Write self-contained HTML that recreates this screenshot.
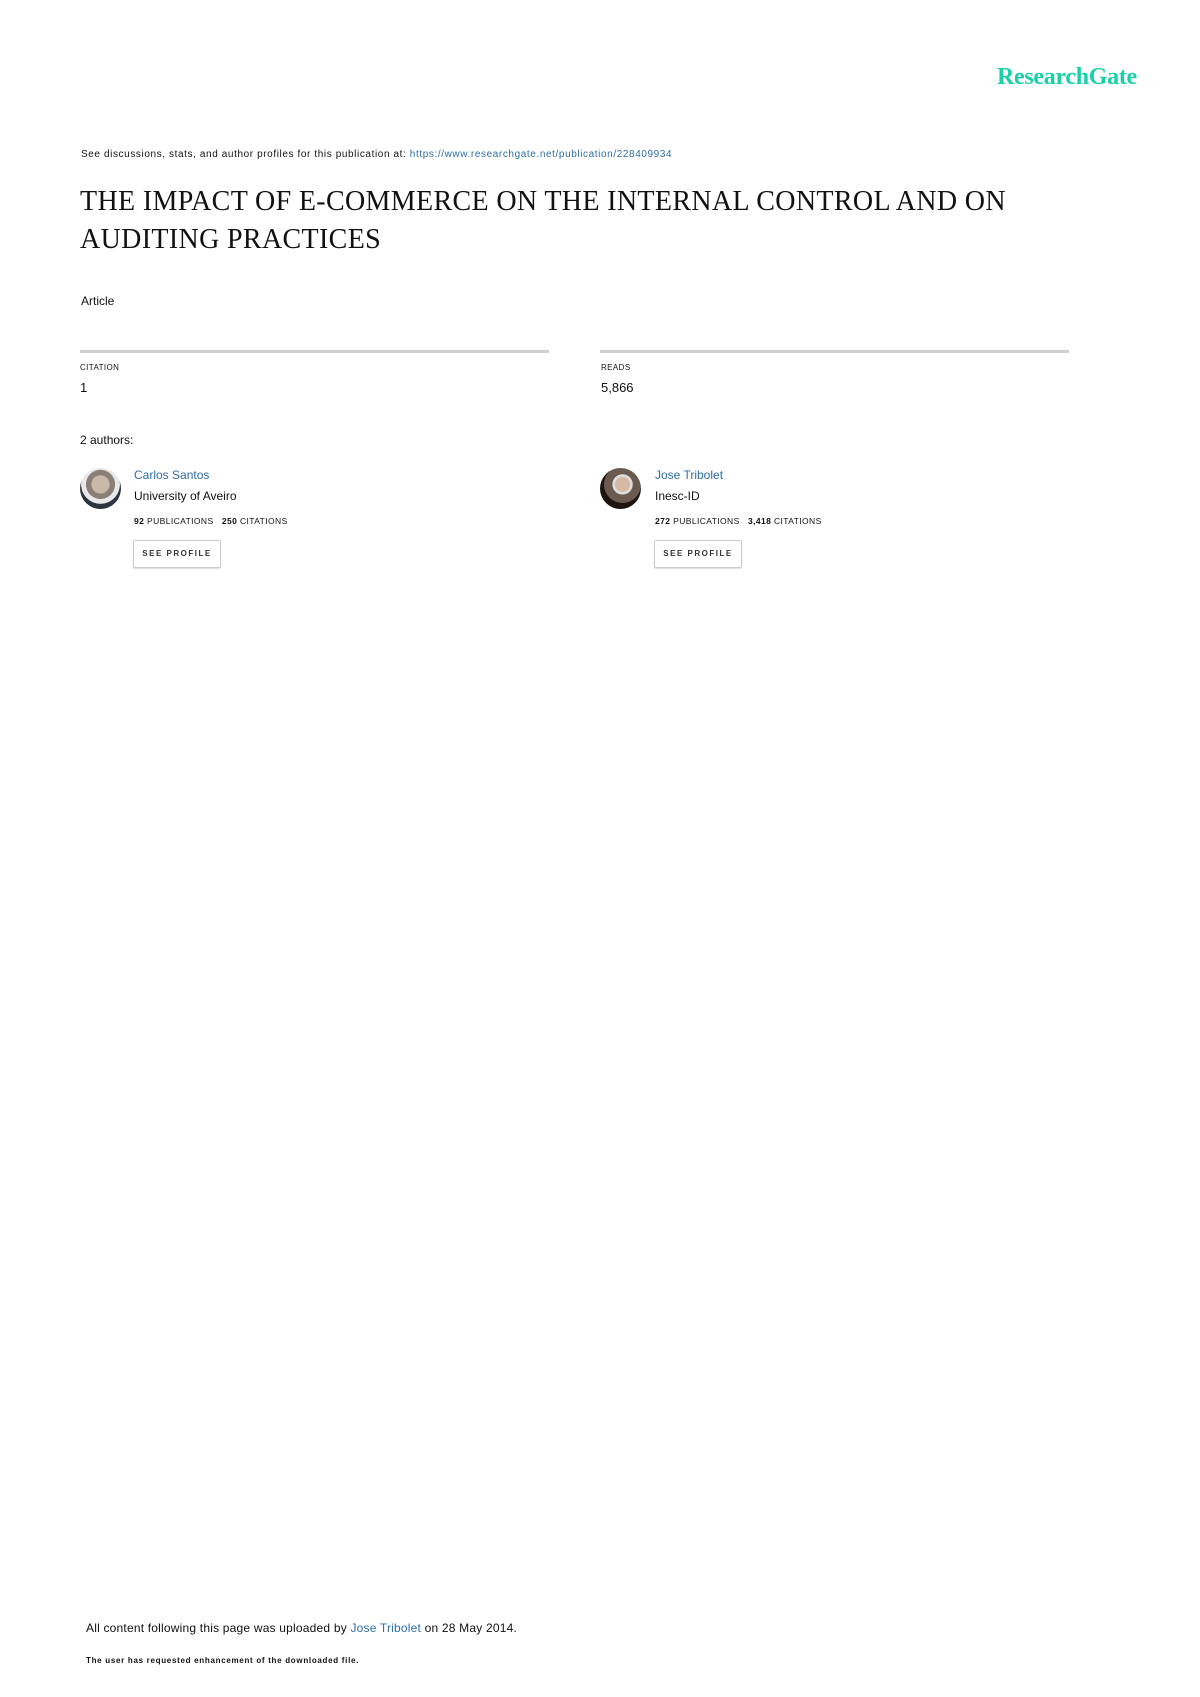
<!DOCTYPE html>
<html><head><meta charset="utf-8"><style>
body{margin:0;width:1200px;height:1697px;background:#fff;position:relative;font-family:"Liberation Sans",sans-serif;color:#111;overflow:hidden}
.a{position:absolute;white-space:nowrap}
.blue{color:#2e6ea6}
.line{position:absolute;height:3px;background:#cfcfcf}
.av{position:absolute;width:41px;height:41px;border-radius:50%;overflow:hidden}
.btn{position:absolute;width:86px;height:26px;border:1px solid #ccc;border-radius:2px;box-shadow:0 1px 1px #ddd;font-size:8px;letter-spacing:1.5px;text-align:center;line-height:26px;font-weight:bold;color:#333}
.sm{font-size:8.5px;letter-spacing:.4px}
</style></head><body>
<div class="a" style="left:997px;top:64px;font-family:'Liberation Serif',serif;font-weight:bold;font-size:24px;color:#19d0a8;letter-spacing:-.3px">ResearchGate</div>
<div class="a" style="left:81px;top:149px;font-size:10px;letter-spacing:.6px">See discussions, stats, and author profiles for this publication at: <span class="blue">https://www.researchgate.net/publication/228409934</span></div>
<div class="a" style="left:80px;top:183px;font-family:'Liberation Serif',serif;font-size:28px;line-height:38px;color:#111;letter-spacing:.35px">THE IMPACT OF E-COMMERCE ON THE INTERNAL CONTROL AND ON<br>AUDITING PRACTICES</div>
<div class="a" style="left:81px;top:294px;font-size:12px">Article</div>
<div class="line" style="left:80px;top:350px;width:469px"></div>
<div class="line" style="left:600px;top:350px;width:469px"></div>
<div class="a sm" style="left:80px;top:363px;font-size:8px">CITATION</div>
<div class="a" style="left:80px;top:380px;font-size:13px">1</div>
<div class="a sm" style="left:601px;top:363px;font-size:8px">READS</div>
<div class="a" style="left:601px;top:380px;font-size:13px">5,866</div>
<div class="a" style="left:80px;top:433px;font-size:12px">2 authors:</div>

<div class="av" style="left:80px;top:468px;background:radial-gradient(circle at 50% 40%,#c9b9a8 0 28%,#8a8078 29% 45%,#e8e8e8 46% 60%,#2c3440 61%)"></div>
<div class="a blue" style="left:134px;top:468px;font-size:12px">Carlos Santos</div>
<div class="a" style="left:134px;top:489px;font-size:12px">University of Aveiro</div>
<div class="a sm" style="left:134px;top:516px"><b>92</b> PUBLICATIONS &nbsp; <b>250</b> CITATIONS</div>
<div class="btn" style="left:133px;top:540px">SEE PROFILE</div>

<div class="av" style="left:600px;top:468px;background:radial-gradient(circle at 55% 40%,#d6b8a4 0 22%,#ddd 23% 30%,#6a5a50 31% 55%,#1d1410 56%)"></div>
<div class="a blue" style="left:655px;top:468px;font-size:12px">Jose Tribolet</div>
<div class="a" style="left:655px;top:489px;font-size:12px">Inesc-ID</div>
<div class="a sm" style="left:655px;top:516px"><b>272</b> PUBLICATIONS &nbsp; <b>3,418</b> CITATIONS</div>
<div class="btn" style="left:654px;top:540px">SEE PROFILE</div>

<div class="a" style="left:86px;top:1621px;font-size:12px;letter-spacing:.2px">All content following this page was uploaded by <span class="blue">Jose Tribolet</span> on 28 May 2014.</div>
<div class="a" style="left:86px;top:1656px;font-size:8px;font-weight:bold;letter-spacing:.7px">The user has requested enhancement of the downloaded file.</div>
</body></html>
